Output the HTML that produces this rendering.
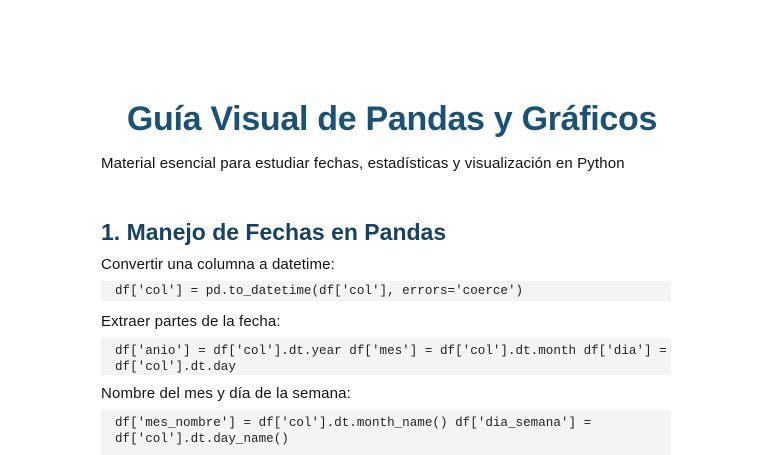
<!DOCTYPE html>
<html><head><meta charset="utf-8"><style>
body{margin:0;width:784px;height:441px;overflow:hidden;background:#fff;font-family:"Liberation Sans",sans-serif;color:#111;}
.abs{position:absolute;white-space:nowrap;}
h1{position:absolute;left:0;width:784px;text-align:center;top:100px;margin:0;font-size:34px;font-weight:bold;color:#1a5276;letter-spacing:-0.3px;}
.p{font-size:15px;letter-spacing:0.14px;}
h2{position:absolute;left:101px;top:219px;margin:0;font-size:23px;color:#154360;letter-spacing:0px;}
.code{position:absolute;left:101px;width:556px;background:#f4f4f4;padding:0 0 0 14px;font-family:"Liberation Mono",monospace;font-size:12.6px;line-height:16px;color:#222;white-space:pre;}
</style></head><body>
<h1>Guía Visual de Pandas y Gráficos</h1>
<div class="abs p" style="left:101px;top:155px">Material esencial para estudiar fechas, estadísticas y visualización en Python</div>
<h2>1. Manejo de Fechas en Pandas</h2>
<div class="abs p" style="left:101px;top:256px">Convertir una columna a datetime:</div>
<div class="code" style="top:281px;height:18px;padding-top:2px">df['col'] = pd.to_datetime(df['col'], errors='coerce')</div>
<div class="abs p" style="left:101px;top:313px">Extraer partes de la fecha:</div>
<div class="code" style="top:338px;height:32px;padding-top:5px">df['anio'] = df['col'].dt.year df['mes'] = df['col'].dt.month df['dia'] =
df['col'].dt.day</div>
<div class="abs p" style="left:101px;top:385px">Nombre del mes y día de la semana:</div>
<div class="code" style="top:410px;height:40px;padding-top:5px">df['mes_nombre'] = df['col'].dt.month_name() df['dia_semana'] =
df['col'].dt.day_name()</div>
</body></html>
